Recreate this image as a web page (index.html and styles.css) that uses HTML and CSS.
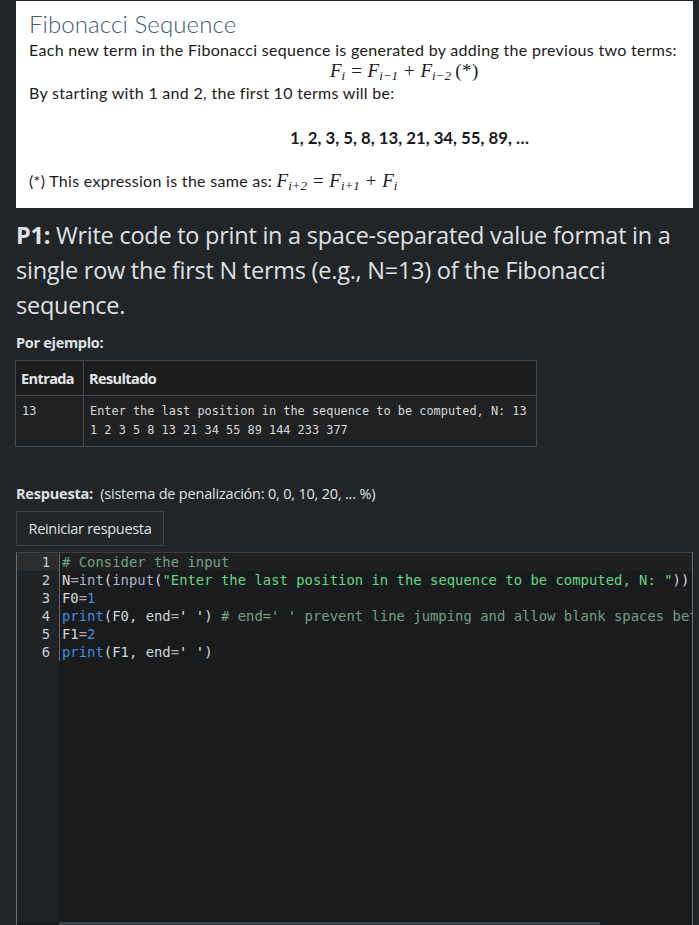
FILE: index.html
```html
<!DOCTYPE html>
<html lang="es">
<head>
<meta charset="utf-8">
<title>Fibonacci</title>
<link rel="stylesheet" href="styles.css">
</head>
<body>
<div class="page">
  <div class="figure">
    <div class="fig-title">Fibonacci Sequence</div>
    <div class="fig-line">Each new term in the Fibonacci sequence is generated by adding the previous two terms:</div>
    <div class="fig-formula"><span class="m">F<sub>i</sub> = F<sub>i−1</sub> + F<sub>i−2</sub></span> <span class="star">(*)</span></div>
    <div class="fig-line">By starting with 1 and 2, the first 10 terms will be:</div>
    <div class="fig-seq">1, 2, 3, 5, 8, 13, 21, 34, 55, 89, …</div>
    <div class="fig-line fig-note">(*) This expression is the same as: <span class="m">F<sub>i+2</sub> = F<sub>i+1</sub> + F<sub>i</sub></span></div>
  </div>

  <p class="question"><b>P1:</b> Write code to print in a space-separated value format in a single row the first N terms (e.g., N=13) of the Fibonacci sequence.</p>

  <div class="example-label">Por ejemplo:</div>
  <table class="examples">
    <thead>
      <tr><th class="c1">Entrada</th><th>Resultado</th></tr>
    </thead>
    <tbody>
      <tr><td class="c1">13</td><td>Enter the last position in the sequence to be computed, N: 13<br>1 2 3 5 8 13 21 34 55 89 144 233 377</td></tr>
    </tbody>
  </table>

  <div class="answer-label"><b>Respuesta:</b>&nbsp; (sistema de penalización: 0, 0, 10, 20, ... %)</div>
  <button class="reset">Reiniciar respuesta</button>

  <div class="editor">
    <div class="editor-body">
      <div class="gutter">
        <div class="ln active">1</div>
        <div class="ln">2</div>
        <div class="ln">3</div>
        <div class="ln">4</div>
        <div class="ln">5</div>
        <div class="ln">6</div>
      </div>
      <div class="code">
        <div class="cl active"><span class="cm"># Consider the input</span></div>
        <div class="cl"><span class="v">N</span><span class="op">=</span><span class="bi">int</span>(<span class="bi">input</span>(<span class="st">"Enter the last position in the sequence to be computed, N: "</span>))</div>
        <div class="cl"><span class="v">F0</span><span class="op">=</span><span class="nu">1</span></div>
        <div class="cl"><span class="kw">print</span>(F0, end<span class="op">=</span><span class="st2">' '</span>) <span class="cm"># end=' ' prevent line jumping and allow blank spaces between terms</span></div>
        <div class="cl"><span class="v">F1</span><span class="op">=</span><span class="nu">2</span></div>
        <div class="cl"><span class="kw">print</span>(F1, end<span class="op">=</span><span class="st2">' '</span>)</div>
      </div>
    </div>
    <div class="hscroll"><div class="thumb"></div></div>
  </div>
</div>
</body>
</html>
```

FILE: styles.css
```css
html, body {
  margin: 0;
  padding: 0;
  background: #222527;
  overflow: hidden;
}

.page {
  padding: 1px 0 0 16px;
  color: #dee2e6;
  font-family: "Open Sans", "Noto Sans", sans-serif;
}

/* white figure */
.figure {
  width: 677px;
  height: 207px;
  box-sizing: border-box;
  background: #ffffff;
  padding: 8px 0 0 13px;
  font-family: Lato, "Open Sans", sans-serif;
  color: #1a1a1a;
}
.fig-title {
  font-size: 24px;
  font-weight: 300;
  color: #3e5a7c;
  line-height: 30px;
  letter-spacing: 0.1px;
}
.fig-line {
  font-size: 16px;
  line-height: 21px;
  letter-spacing: 0.3px;
}
.fig-formula {
  padding-left: 301px;
  font-size: 17px;
  line-height: 22px;
}
.m {
  font-family: "Liberation Serif", "DejaVu Serif", serif;
  font-style: italic;
  font-size: 19px;
  letter-spacing: 0;
}
.m sub {
  font-size: 13px;
  vertical-align: -3px;
  line-height: 0;
}
.star {
  font-family: "Liberation Serif", serif;
  font-size: 19px;
  letter-spacing: 0.5px;
}
.fig-seq {
  padding-left: 261px;
  font-weight: 700;
  font-size: 16.8px;
  line-height: 22px;
  margin-top: 24px;
  letter-spacing: 0;
}
.fig-note {
  margin-top: 21px;
}

/* question */
.question {
  margin: 10px 0 0 0;
  font-size: 23.5px;
  line-height: 35px;
  width: 670px;
  letter-spacing: -0.25px;
}
.question b {
  font-weight: 700;
}

.example-label {
  margin-top: 9px;
  font-size: 14.5px;
  font-weight: 700;
  line-height: 22px;
  letter-spacing: -0.3px;
}

.examples {
  margin-top: 6px;
  border-collapse: collapse;
  width: 522px;
  margin-left: -1px;
}
.examples th, .examples td {
  border: 1px solid #45494c;
  text-align: left;
  vertical-align: top;
}
.examples th {
  background: #1c1d1f;
  font-size: 14.5px;
  font-weight: 700;
  height: 35px;
  box-sizing: border-box;
  padding: 0 5px;
  vertical-align: middle;
  letter-spacing: -0.6px;
  color: #e4e6e8;
}
.examples th.c1 {
  width: 68px;
}
.examples td {
  background: #202123;
  font-family: "DejaVu Sans Mono", monospace;
  font-size: 11.9px;
  line-height: 19px;
  padding: 6px 6px 4px 6px;
  height: 51px;
  box-sizing: border-box;
  color: #d8d8d8;
}

.answer-label {
  margin-top: 36px;
  font-size: 14.5px;
  line-height: 22px;
  letter-spacing: -0.2px;
}
.answer-label b {
  font-weight: 700;
}

.reset {
  display: block;
  margin-top: 6px;
  width: 148px;
  height: 35px;
  background: #222527;
  border: 1px solid #3d4043;
  color: #dee2e6;
  font-family: "Open Sans", sans-serif;
  font-size: 14.5px;
  letter-spacing: -0.3px;
  padding: 0;
  text-align: center;
}

/* editor */
.editor {
  margin-top: 6px;
  width: 677px;
  box-sizing: border-box;
  border-top: 1px solid #3c3f42;
  border-left: 1px solid #6a6e72;
  border-right: 1px solid #6a6e72;
  background: #1a1b1d;
}
.editor-body {
  display: flex;
  height: 369px;
}
.gutter {
  width: 42px;
  background: #1f2326;
  flex: none;
}
.ln {
  height: 18px;
  line-height: 18px;
  text-align: right;
  padding-right: 9px;
  font-family: "DejaVu Sans Mono", monospace;
  font-size: 13.9px;
  color: #c9cdd0;
}
.ln.active {
  background: #2a2c2e;
}
.code {
  flex: 1;
  min-width: 0;
  overflow: hidden;
  font-family: "DejaVu Sans Mono", monospace;
  font-size: 13.9px;
  color: #d4d7da;
  align-self: flex-start;
  border-left: 1px solid #6b6658;
  padding-left: 2px;
}
.cl {
  height: 18px;
  line-height: 18px;
  white-space: pre;
  overflow: hidden;
}
.cl.active {
  background: #1e2022;
}
.cm { color: #72a184; }
.st { color: #63d883; }
.st2 { color: #e6e6e6; }
.v { color: #d8dadc; }
.op { color: #a9adb2; }
.bi { color: #a9b5cf; }
.nu { color: #3a8ee6; }
.kw { color: #3f8de0; }

.hscroll {
  height: 6px;
  padding-left: 42px;
}
.thumb {
  width: 541px;
  height: 6px;
  background: #3d4447;
}
```
